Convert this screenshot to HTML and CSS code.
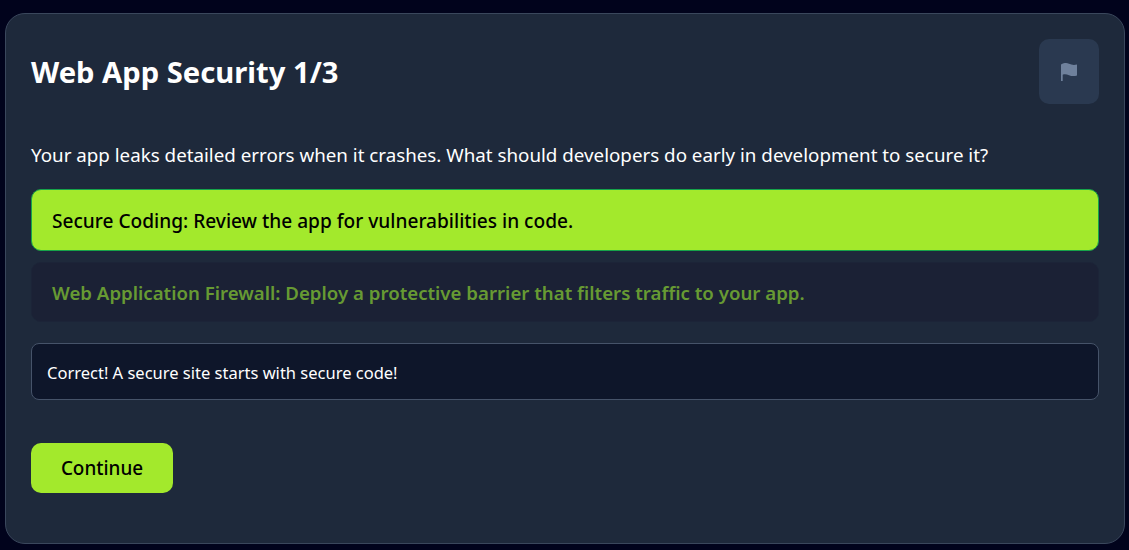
FILE: index.html
```html
<!DOCTYPE html>
<html lang="en">
<head>
<meta charset="utf-8">
<title>Web App Security</title>
<link rel="stylesheet" href="styles.css">
</head>
<body>
<main class="card">
  <header class="card-head">
    <h1 class="title">Web App Security 1/3</h1>
    <button class="flag-btn" type="button" aria-label="Flag">
      <svg class="flag-icon" viewBox="0 0 16 18" width="16" height="18"><path d="M0 1.400C2.800-.5 5.500-.3 8 .8c2.500 1.100 5 1.500 8 .7v11c-3 1-5.500.7-8-.3-2.200-.9-4.300-1.300-6.300-.5V18H0z"/></svg>
    </button>
  </header>
  <p class="question">Your app leaks detailed errors when it crashes. What should developers do early in development to secure it?</p>
  <div class="options">
    <button class="option option-correct" type="button">Secure Coding: Review the app for vulnerabilities in code.</button>
    <button class="option option-muted" type="button">Web Application Firewall: Deploy a protective barrier that filters traffic to your app.</button>
  </div>
  <div class="feedback">Correct! A secure site starts with secure code!</div>
  <button class="continue" type="button">Continue</button>
</main>
</body>
</html>
```
FILE: styles.css
```css
* { box-sizing: border-box; }
html, body { height: 100%; }
body {
  margin: 0;
  padding: 13px 4px 6px 5px;
  background: #01031c;
  font-family: "Noto Sans", "Open Sans", sans-serif;
  color: #fff;
  overflow: hidden;
}
.card {
  height: 531px;
  padding: 25px 25px 0;
  background: #1e293b;
  border: 1px solid #3a475c;
  border-radius: 20px;
}
.card-head {
  display: flex;
  justify-content: space-between;
  align-items: center;
  height: 65px;
}
.title { margin: 0; font-size: 29.2px; font-weight: 700; line-height: 40px; }
.flag-btn {
  display: flex;
  align-items: center;
  justify-content: center;
  width: 60px;
  height: 65px;
  padding: 0;
  background: #2a3950;
  border: 0;
  border-radius: 10px;
}
.flag-icon { fill: #6f819c; }
.question { margin: 36px 0 0; font-size: 18.78px; line-height: 30px; height: 30px; }
.options { display: flex; flex-direction: column; gap: 11px; margin-top: 19px; }
.option {
  display: block;
  width: 100%;
  padding: 1px 20px 0;
  border-radius: 10px;
  font-family: inherit;
  text-align: left;
}
.option-correct {
  height: 62px;
  background: #a3e92c;
  border: 1px solid #16a34a;
  color: #000;
  font-size: 19.1px;
  font-weight: 500;
}
.option-muted {
  height: 60px;
  background: #1b2135;
  border: 1px solid #1c2438;
  color: #679a33;
  font-size: 18.67px;
  font-weight: 600;
}
.feedback {
  display: flex;
  align-items: center;
  height: 57px;
  margin-top: 21px;
  padding: 1px 15px 0;
  background: #0e162a;
  border: 1px solid #465369;
  border-radius: 8px;
  font-size: 16.5px;
}
.continue {
  display: block;
  width: 142px;
  height: 50px;
  margin-top: 43px;
  background: #a3e92c;
  border: 0;
  border-radius: 10px;
  color: #000;
  font-family: inherit;
  font-size: 18.9px;
  font-weight: 500;
}
```
